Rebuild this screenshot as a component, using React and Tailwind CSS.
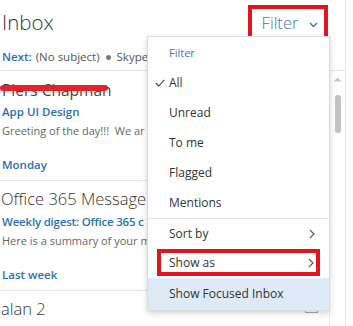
import React from "react";

function Chevron({ className }) {
  return (
    <svg className={className} width="9" height="6" viewBox="0 0 9 6" fill="none">
      <path d="M1 1l3.5 3.5L8 1" stroke="currentColor" strokeWidth="1.4" />
    </svg>
  );
}

function Right({ className }) {
  return (
    <svg className={className} width="6" height="10" viewBox="0 0 6 10" fill="none">
      <path d="M1 1l4 4-4 4" stroke="currentColor" strokeWidth="1.1" />
    </svg>
  );
}

function Clip({ children, className }) {
  return <div className={"w-[147px] overflow-hidden whitespace-nowrap " + (className || "")}>{children}</div>;
}

export default function App() {
  const items = ["Unread", "To me", "Flagged", "Mentions"];
  return (
    <div className="relative w-[353px] h-[326px] bg-white overflow-hidden font-['Open_Sans',sans-serif] text-[#333]">
      <div className="w-[346px] h-full border-r border-[#e6e6e6] flex flex-col">
        {/* header */}
        <div className="h-[44px] flex items-start justify-between">
          <div className="pl-[2px] pt-[7px] text-[20.5px] font-light leading-[30px] text-[#333]">Inbox</div>
          <div className="mt-[5px] mr-[17px] w-[80px] h-[37px] border-[4px] border-[#e0151f] flex items-center justify-center gap-[11px] text-[#3f74b3]">
            <span className="text-[16.5px] font-light leading-none pl-[4px]">Filter</span>
            <Chevron className="mt-[2px]" />
          </div>
        </div>
        {/* next */}
        <Clip className="h-[26px] pl-[2px] flex items-center text-[11.5px]">
          <span className="text-[#2c6fb3] font-semibold">Next:</span>
          <span className="ml-[4px] text-[#555]">(No subject)</span>
          <span className="mx-[6px] inline-block shrink-0 w-[5px] h-[5px] rounded-full bg-[#777]" />
          <span className="text-[#555]">Skype</span>
        </Clip>
        {/* list */}
        <div className="flex-1 flex border-t border-[#e6e6e6]">
          <div className="w-[329px] flex flex-col whitespace-nowrap">
            <div className="h-[30px] pl-[2px] flex items-end">
              <span className="relative text-[15.5px] leading-[22px] text-[#444]">
                Piers Chapman
                <span className="absolute left-[-2px] top-[6px] w-[108px] h-[6px] rounded-full bg-[#e8202a]" />
              </span>
            </div>
            <Clip className="h-[22px] pl-[2px] flex items-center text-[11.5px] font-semibold text-[#2c6fb3]">App UI Design</Clip>
            <Clip className="h-[16px] pl-[2px] flex items-center text-[11px] text-[#666]">Greeting of the day!!!&nbsp; We ar</Clip>
            <div className="h-[41px] pl-[2px] flex items-end pb-[7px] text-[11.5px] leading-[16px] font-semibold text-[#2c6fb3]">Monday</div>
            <div className="border-t border-[#e6e6e6] h-[31px] pl-[1px] flex items-end">
              <Clip className="text-[16.5px] font-light leading-[24px] text-[#333]">Office 365 Message</Clip>
            </div>
            <Clip className="h-[22px] pl-[2px] flex items-center text-[11.5px] tracking-[-0.2px] font-semibold text-[#2c6fb3]">Weekly digest: Office 365 c</Clip>
            <Clip className="h-[17px] pl-[2px] flex items-center text-[11px] text-[#666]">Here is a summary of your m</Clip>
            <div className="h-[40px] pl-[2px] flex items-end pb-[7px] text-[11.5px] leading-[16px] font-semibold text-[#2c6fb3]">Last week</div>
            <div className="border-t border-[#e6e6e6] h-[31px] pl-[1px] flex items-end justify-between">
              <span className="text-[16.5px] font-light leading-[24px] text-[#333]">alan 2</span>
              <div className="mr-[11px] mb-[8px] w-[13px] h-[7px] border border-t-0 border-[#aaa]" />
            </div>
          </div>
          <div className="w-[16px] border-l border-[#e6e6e6] flex flex-col items-center pt-[6px]">
            <svg width="9" height="5" viewBox="0 0 9 5"><path d="M0.5 4.5L4.5 0.5L8.5 4.5Z" fill="#c8c8c8" /></svg>
            <div className="mt-[13px] w-[6px] h-[38px] rounded-full bg-[#c2c2c2]" />
          </div>
        </div>
      </div>

      {/* dropdown */}
      <div className="absolute left-[147px] top-[36px] w-[183px] h-[275px] bg-white border border-[#dcdcdc] shadow-[0_2px_6px_rgba(0,0,0,0.18)] flex flex-col text-[12px] text-[#333]">
        <div className="h-[31px] pl-[21px] pt-[2px] flex items-center text-[11px] text-[#3f74b3]">Filter</div>
        <div className="h-[30px] pl-[7px] flex items-center">
          <svg width="10" height="8" viewBox="0 0 10 8" fill="none" className="mr-[4px]"><path d="M0.8 4l3 3L9.2 0.8" stroke="#444" strokeWidth="1.1" /></svg>
          <span>All</span>
        </div>
        {items.map((t) => (
          <div key={t} className="h-[30px] pl-[21px] flex items-center">{t}</div>
        ))}
        <div className="border-t border-[#e3e3e3] h-[31px] pl-[21px] pr-[14px] flex items-center justify-between">
          <span>Sort by</span>
          <Right className="text-[#555]" />
        </div>
        <div className="mx-[9px] h-[27px] border-[4px] border-[#e0151f] pl-[8px] pr-[2px] flex items-center justify-between">
          <span>Show as</span>
          <Right className="text-[#555]" />
        </div>
        <div className="mt-[2px] flex-1 bg-[#deebf7] pl-[21px] flex items-center">Show Focused Inbox</div>
      </div>
    </div>
  );
}
